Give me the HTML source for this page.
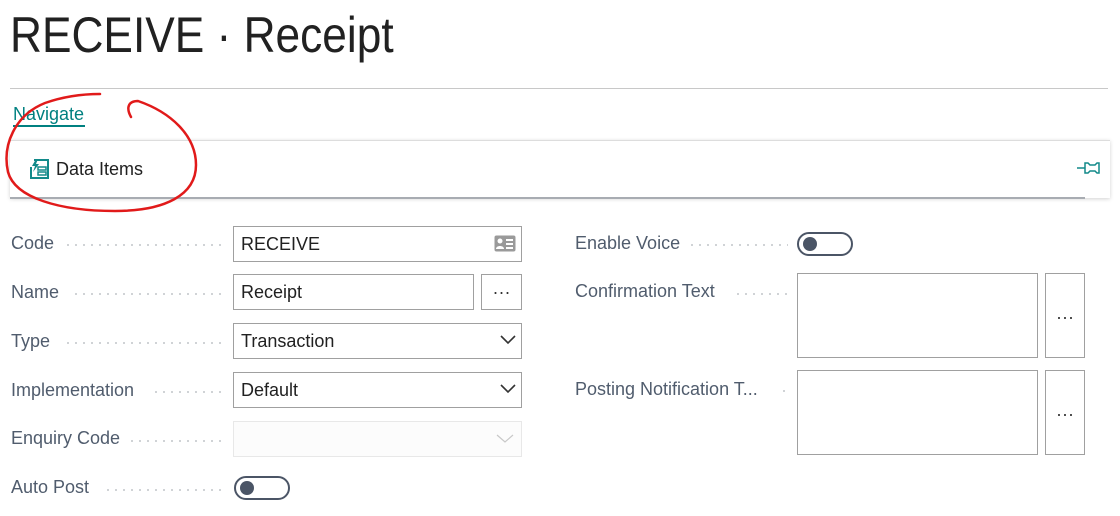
<!DOCTYPE html>
<html><head><meta charset="utf-8"><style>
*{margin:0;padding:0;box-sizing:border-box}
body{width:1120px;height:516px;background:#fff;position:relative;overflow:hidden;font-family:"Liberation Sans",sans-serif;color:#212121}
.a{position:absolute}
.lbl{position:absolute;font-size:18px;color:#505c6d;white-space:nowrap}
.dots{position:absolute;height:2px;background-image:radial-gradient(circle,#c4c8cc 0.9px,transparent 1.1px);background-size:8px 2px}
.inp{position:absolute;border:1px solid #a0a0a0;background:#fff;font-size:18px;color:#212121;padding-left:7px;line-height:34px;height:36px}
.btn{position:absolute;border:1px solid #a0a0a0;background:#fff;display:flex;align-items:center;justify-content:center;font-size:18px;color:#333}
.tog{position:absolute;width:56px;height:24px;border:2px solid #4b5566;border-radius:12px}
.tog:after{content:"";position:absolute;left:4px;top:3px;width:14px;height:14px;border-radius:50%;background:#4b5566}
</style></head><body>
<div class="a" style="left:10px;top:6px;font-size:50px;color:#212121;transform:scaleX(0.885);transform-origin:0 0;white-space:nowrap">RECEIVE · Receipt</div>
<div class="a" style="left:10px;top:88px;width:1098px;height:1px;background:#c8c8c8"></div>
<div class="a" style="left:13px;top:104px;font-size:18px;color:#008080">Navigate</div>
<div class="a" style="left:13px;top:125px;width:72px;height:2px;background:#008080"></div>
<div class="a" style="left:10px;top:140px;width:1100px;height:58px;background:#fff;box-shadow:0 1px 4px rgba(0,0,0,.18);border-top:1px solid #ddd"></div>
<div class="a" style="left:10px;top:197px;width:1075px;height:2px;background:#a8acb2"></div>
<svg class="a" style="left:29px;top:158px" width="22" height="22" viewBox="0 0 22 22"><path d="M5 2h14v18H2V9" fill="none" stroke="#128a8a" stroke-width="2"/><path d="M7 1L3 8h3l-2 6 6-8H7l2-5z" fill="#128a8a"/><rect x="9" y="9" width="8" height="3" fill="none" stroke="#128a8a" stroke-width="1.5"/><rect x="9" y="14" width="8" height="3" fill="none" stroke="#128a8a" stroke-width="1.5"/></svg>
<div class="a" style="left:56px;top:159px;font-size:18px;color:#212121">Data Items</div>
<svg class="a" style="left:1076px;top:160px" width="26" height="16" viewBox="0 0 26 16"><path d="M1 8h8M9 3h3l2 2h5l2-2h2v10h-2l-2-2h-5l-2 2H9z" fill="none" stroke="#128a8a" stroke-width="1.5"/></svg>

<div class="lbl" style="left:11px;top:233px">Code</div><div class="dots" style="left:64px;top:244px;width:162px"></div>
<div class="inp" style="left:233px;top:226px;width:289px">RECEIVE</div>
<svg class="a" style="left:494px;top:235px" width="22" height="17" viewBox="0 0 22 17"><rect x="0.5" y="0.5" width="21" height="16" rx="2" fill="#9a9a9a"/><circle cx="6" cy="6" r="2.5" fill="#fff"/><path d="M2 14c0-4 8-4 8 0z" fill="#fff"/><rect x="12" y="4" width="7" height="2" fill="#fff"/><rect x="12" y="8" width="7" height="2" fill="#fff"/><rect x="12" y="12" width="7" height="2" fill="#fff"/></svg>

<div class="lbl" style="left:11px;top:282px">Name</div><div class="dots" style="left:72px;top:293px;width:154px"></div>
<div class="inp" style="left:233px;top:274px;width:241px">Receipt</div>
<div class="btn" style="left:481px;top:274px;width:41px;height:36px">···</div>

<div class="lbl" style="left:11px;top:331px">Type</div><div class="dots" style="left:64px;top:342px;width:162px"></div>
<div class="inp" style="left:233px;top:323px;width:289px">Transaction</div>
<svg class="a" style="left:500px;top:335px" width="16" height="10"><path d="M1 1l7 7 7-7" fill="none" stroke="#333" stroke-width="1.6"/></svg>

<div class="lbl" style="left:11px;top:380px">Implementation</div><div class="dots" style="left:152px;top:391px;width:74px"></div>
<div class="inp" style="left:233px;top:372px;width:289px">Default</div>
<svg class="a" style="left:500px;top:384px" width="16" height="10"><path d="M1 1l7 7 7-7" fill="none" stroke="#333" stroke-width="1.6"/></svg>

<div class="lbl" style="left:11px;top:428px">Enquiry Code</div><div class="dots" style="left:128px;top:440px;width:98px"></div>
<div class="inp" style="left:233px;top:421px;width:289px;border-color:#e8e8e8;background:#fcfcfc"></div>
<svg class="a" style="left:496px;top:434px" width="18" height="10"><path d="M1 1l8 7 8-7" fill="none" stroke="#c8c8c8" stroke-width="1.2"/></svg>

<div class="lbl" style="left:11px;top:477px">Auto Post</div><div class="dots" style="left:104px;top:489px;width:122px"></div>
<div class="tog" style="left:234px;top:476px"></div>

<div class="lbl" style="left:575px;top:233px">Enable Voice</div><div class="dots" style="left:688px;top:244px;width:100px"></div>
<div class="tog" style="left:797px;top:232px"></div>

<div class="lbl" style="left:575px;top:281px">Confirmation Text</div><div class="dots" style="left:734px;top:293px;width:54px"></div>
<div class="inp" style="left:797px;top:273px;width:241px;height:85px"></div>
<div class="btn" style="left:1045px;top:273px;width:40px;height:85px;padding-top:4px">···</div>

<div class="lbl" style="left:575px;top:379px">Posting Notification T...</div><div class="dots" style="left:780px;top:390px;width:8px"></div>
<div class="inp" style="left:797px;top:370px;width:241px;height:85px"></div>
<div class="btn" style="left:1045px;top:370px;width:40px;height:85px;padding-top:4px">···</div>

<svg class="a" style="left:0;top:0" width="1120" height="516"><path d="M131 117C126 108 128 101 138 101C170 112 196 135 196 165C196 195 165 211 115 211C60 211 15 198 8 172C2 145 15 115 45 103C65 96 85 94 100 94" fill="none" stroke="#e11a1a" stroke-width="2.5" stroke-linecap="round"/></svg>
</body></html>
